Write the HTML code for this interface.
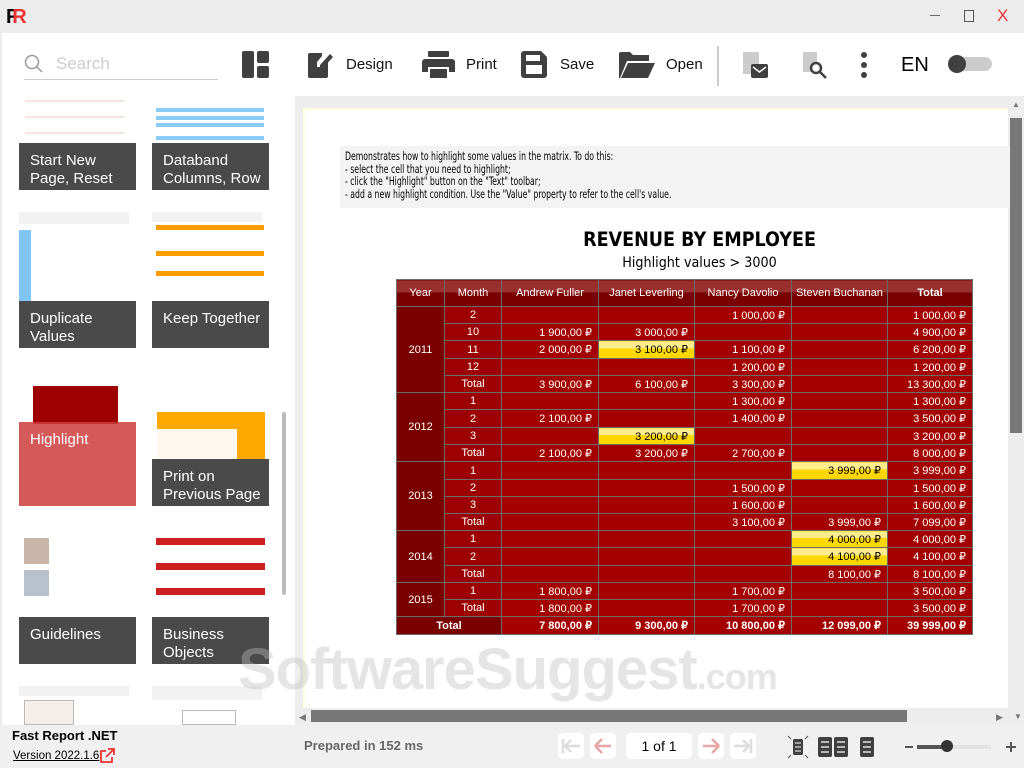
<!DOCTYPE html>
<html><head><meta charset="utf-8">
<style>
*{margin:0;padding:0;box-sizing:border-box}
body{width:1024px;height:768px;overflow:hidden;background:#fff;font-family:"Liberation Sans",sans-serif;position:relative}
.a{position:absolute}
.tb{font-size:15px;color:#111}
.tile{position:absolute;width:117px;background:#fff;overflow:hidden}
.lbl{position:absolute;left:0;right:0;bottom:0;background:#4a4a4a;color:#fff;font-size:15px;line-height:18px;padding:9px 0 0 11px}
.ln{position:absolute;height:2px;background:#ddd}
table{border-collapse:collapse;table-layout:fixed;font-family:"Liberation Sans",sans-serif;font-size:11px;color:#fff}
td{border:1px solid #6b6b6b;background:#a40000;text-align:right;padding:0 6px 0 0;white-space:nowrap;overflow:hidden}
td.m{text-align:center;padding:0;background:#9c0000}
td.y{text-align:center;padding:0;background:#7a0000}
th{border:1px solid #6b6b6b;font-weight:normal;background:linear-gradient(#983030 0,#983030 45%,#7a0000 46%,#7a0000);height:27px}
td.h{background:linear-gradient(#ffec8c 0,#ffec8c 40%,#ffd700 41%,#ffd700);color:#000}
tr.tot td{font-weight:bold;background:#a40000}
tr.tot td.y{background:#7a0000}
</style></head><body>
<div class="a" style="left:0;top:0;width:1024px;height:33px;background:#ececec"></div>
<div class="a" style="left:6px;top:6px;font:bold 20px 'Liberation Sans';color:#000;letter-spacing:-6px">F<span style="color:#e33">R</span></div>
<div class="a" style="left:930px;top:15px;width:10px;height:1px;background:#666"></div>
<div class="a" style="left:964px;top:10px;width:10px;height:12px;border:1px solid #555"></div>
<div class="a" style="left:997px;top:6px;color:#e33;font-size:17px">X</div>
<div class="a" style="left:0;top:33px;width:2px;height:692px;background:#ececec"></div>
<svg class="a" style="left:24px;top:54px" width="20" height="20"><circle cx="8" cy="8" r="6.5" fill="none" stroke="#999" stroke-width="1.5"/><line x1="12.5" y1="12.5" x2="18" y2="18" stroke="#999" stroke-width="1.5"/></svg>
<div class="a" style="left:56px;top:54px;font-size:17px;color:#ccc">Search</div>
<div class="a" style="left:24px;top:79px;width:194px;height:1px;background:#ccc"></div>
<svg class="a" style="left:242px;top:51px" width="27" height="27"><rect x="0" y="0" width="12" height="27" rx="2" fill="#404040"/><rect x="15" y="0" width="12" height="12" rx="2" fill="#404040"/><rect x="15" y="15" width="12" height="12" rx="2" fill="#404040"/></svg>
<svg class="a" style="left:308px;top:51px" width="26" height="27"><path d="M2 2h12v3l-5 6v5h5l6-6v15a2 2 0 0 1-2 2H2a2 2 0 0 1-2-2V4a2 2 0 0 1 2-2z" fill="#404040"/><path d="M12 14l10-11 3 3-10 11h-3z" fill="#404040"/></svg>
<div class="a tb" style="left:346px;top:56px">Design</div>
<svg class="a" style="left:422px;top:51px" width="33" height="27"><rect x="6" y="0" width="21" height="6" rx="1" fill="#404040"/><path d="M3 8h27a3 3 0 0 1 3 3v10h-6v-5H6v5H0V11a3 3 0 0 1 3-3z" fill="#404040"/><rect x="8" y="18" width="17" height="9" fill="#404040"/></svg>
<div class="a tb" style="left:466px;top:56px">Print</div>
<svg class="a" style="left:521px;top:51px" width="26" height="27"><path d="M3 0h17l6 6v18a3 3 0 0 1-3 3H3a3 3 0 0 1-3-3V3a3 3 0 0 1 3-3z" fill="#404040"/><rect x="5" y="4" width="14" height="6" fill="#fff"/><rect x="5" y="14" width="16" height="9" fill="#fff"/></svg>
<div class="a tb" style="left:560px;top:56px">Save</div>
<svg class="a" style="left:619px;top:52px" width="36" height="26"><path d="M0 2a2 2 0 0 1 2-2h9l3 3h16v6H8L1 26H0z" fill="#404040"/><path d="M9 11h27l-7 15H2z" fill="#404040"/></svg>
<div class="a tb" style="left:666px;top:56px">Open</div>
<div class="a" style="left:717px;top:46px;width:2px;height:40px;background:#ccc"></div>
<div class="a" style="left:743px;top:52px;width:16px;height:22px;background:#ccc"></div>
<svg class="a" style="left:751px;top:64px" width="17" height="14"><rect width="17" height="14" rx="2" fill="#404040"/><path d="M2 3l6.5 5 6.5-5" fill="none" stroke="#fff" stroke-width="1.5"/></svg>
<div class="a" style="left:803px;top:52px;width:14px;height:20px;background:#ccc"></div>
<svg class="a" style="left:809px;top:61px" width="20" height="18"><circle cx="7" cy="7" r="5" fill="#fff" stroke="#404040" stroke-width="2.5"/><line x1="11" y1="11" x2="17" y2="17" stroke="#404040" stroke-width="2.5"/></svg>
<div class="a" style="left:861px;top:52px;width:6px;height:6px;border-radius:3px;background:#404040"></div>
<div class="a" style="left:861px;top:62px;width:6px;height:6px;border-radius:3px;background:#404040"></div>
<div class="a" style="left:861px;top:72px;width:6px;height:6px;border-radius:3px;background:#404040"></div>
<div class="a" style="left:901px;top:54px;font-size:20px;color:#000">EN</div>
<div class="a" style="left:952px;top:57px;width:40px;height:14px;border-radius:7px;background:#ccc"></div>
<div class="a" style="left:948px;top:55px;width:18px;height:18px;border-radius:9px;background:#404040"></div>

<div class="tile" style="left:19px;top:96px;height:94px"><div class="ln" style="left:6px;top:4px;width:100px;background:#f5e6dc"></div><div class="ln" style="left:6px;top:20px;width:100px;background:#f5e6dc"></div><div class="ln" style="left:6px;top:36px;width:100px;background:#f5e6dc"></div><div class="lbl" style="height:47px">Start New<br>Page, Reset</div></div>
<div class="tile" style="left:152px;top:96px;height:94px"><div class="ln" style="left:4px;top:12px;width:108px;height:4px;background:#8ccaf7"></div><div class="ln" style="left:4px;top:20px;width:108px;height:4px;background:#8ccaf7"></div><div class="ln" style="left:4px;top:27px;width:108px;height:4px;background:#8ccaf7"></div><div class="ln" style="left:4px;top:40px;width:108px;height:4px;background:#8ccaf7"></div><div class="lbl" style="height:47px">Databand<br>Columns, Row</div></div>
<div class="tile" style="left:19px;top:212px;height:136px"><div class="ln" style="left:0;top:0;width:110px;height:12px;background:#f2f2f2"></div><div class="ln" style="left:0;top:18px;width:12px;height:80px;background:#7fc6f7"></div><div class="lbl" style="height:47px">Duplicate<br>Values</div></div>
<div class="tile" style="left:152px;top:212px;height:136px"><div class="ln" style="left:0;top:0;width:110px;height:10px;background:#f2f2f2"></div><div class="ln" style="left:4px;top:13px;width:108px;height:5px;background:#ff9c00"></div><div class="ln" style="left:4px;top:39px;width:108px;height:5px;background:#ff9c00"></div><div class="ln" style="left:4px;top:59px;width:108px;height:5px;background:#ff9c00"></div><div class="lbl" style="height:47px">Keep Together</div></div>
<div class="tile" style="left:19px;top:370px;height:136px"><div class="ln" style="left:14px;top:16px;width:85px;height:38px;background:#9e0000"></div><div class="lbl" style="height:84px;background:rgba(205,60,60,0.85)">Highlight</div></div>
<div class="tile" style="left:152px;top:370px;height:136px"><div class="ln" style="left:5px;top:42px;width:108px;height:47px;background:#ffa800"></div><div class="ln" style="left:5px;top:59px;width:80px;height:30px;background:#fff8ee"></div><div class="lbl" style="height:47px">Print on<br>Previous Page</div></div>
<div class="tile" style="left:19px;top:528px;height:136px"><div class="ln" style="left:5px;top:10px;width:25px;height:26px;background:#c9b6a8"></div><div class="ln" style="left:5px;top:42px;width:25px;height:26px;background:#b9c2cc"></div><div class="lbl" style="height:47px">Guidelines</div></div>
<div class="tile" style="left:152px;top:528px;height:136px"><div class="ln" style="left:4px;top:10px;width:109px;height:7px;background:#cc1f1f"></div><div class="ln" style="left:4px;top:35px;width:109px;height:7px;background:#cc1f1f"></div><div class="ln" style="left:4px;top:60px;width:109px;height:7px;background:#cc1f1f"></div><div class="lbl" style="height:47px">Business<br>Objects</div></div>
<div class="tile" style="left:19px;top:686px;height:39px"><div class="ln" style="left:0;top:0;width:110px;height:10px;background:#f2f2f2"></div><div class="ln" style="left:5px;top:14px;width:50px;height:25px;background:#f5eee8;border:1px solid #bbb"></div></div>
<div class="tile" style="left:152px;top:686px;height:39px"><div class="ln" style="left:0;top:0;width:110px;height:14px;background:#f2f2f2"></div><div class="ln" style="left:30px;top:24px;width:54px;height:15px;background:#fff;border:1px solid #bbb"></div></div>
<div class="a" style="left:282px;top:412px;width:4px;height:183px;background:#bbb;border-radius:2px"></div>

<div class="a" style="left:295px;top:96px;width:729px;height:629px;background:#ededed"></div>
<div class="a" style="left:303px;top:108px;width:705px;height:600px;background:#fff;border-left:2px solid #ffffe0;border-top:2px solid #ffffe0"></div>
<div class="a" style="left:340px;top:146px;width:695px;height:62px;background:#f3f3f3"></div>
<div class="a" style="left:345px;top:150px;font-family:'DejaVu Sans Condensed','DejaVu Sans',sans-serif;font-size:11.5px;line-height:12.7px;color:#000;transform:scaleX(0.75);transform-origin:left;white-space:nowrap">Demonstrates how to highlight some values in the matrix. To do this:<br>- select the cell that you need to highlight;<br>- click the "Highlight" button on the "Text" toolbar;<br>- add a new highlight condition. Use the "Value" property to refer to the cell's value.</div>
<div class="a" style="left:412px;top:228px;width:575px;text-align:center;font:bold 19.5px 'DejaVu Sans Condensed','DejaVu Sans',sans-serif;color:#000">REVENUE BY EMPLOYEE</div>
<div class="a" style="left:412px;top:255px;width:575px;text-align:center;font:14.2px 'DejaVu Sans Condensed','DejaVu Sans',sans-serif;color:#000">Highlight values &gt; 3000</div>

<table class="a" style="left:396px;top:279px;width:576px">
<colgroup><col style="width:48px"><col style="width:57px"><col style="width:97px"><col style="width:96px"><col style="width:97px"><col style="width:96px"><col style="width:85px"></colgroup>
<tr><th>Year</th><th>Month</th><th>Andrew Fuller</th><th>Janet Leverling</th><th>Nancy Davolio</th><th>Steven Buchanan</th><th style="font-weight:bold">Total</th></tr>
<tr style="height:17px"><td class="y" rowspan="5">2011</td><td class="m">2</td><td></td><td></td><td>1 000,00 ₽</td><td></td><td>1 000,00 ₽</td></tr>
<tr style="height:17px"><td class="m">10</td><td>1 900,00 ₽</td><td>3 000,00 ₽</td><td></td><td></td><td>4 900,00 ₽</td></tr>
<tr style="height:18px"><td class="m">11</td><td>2 000,00 ₽</td><td class="h">3 100,00 ₽</td><td>1 100,00 ₽</td><td></td><td>6 200,00 ₽</td></tr>
<tr style="height:17px"><td class="m">12</td><td></td><td></td><td>1 200,00 ₽</td><td></td><td>1 200,00 ₽</td></tr>
<tr style="height:17px"><td class="m">Total</td><td>3 900,00 ₽</td><td>6 100,00 ₽</td><td>3 300,00 ₽</td><td></td><td>13 300,00 ₽</td></tr>
<tr style="height:17px"><td class="y" rowspan="4">2012</td><td class="m">1</td><td></td><td></td><td>1 300,00 ₽</td><td></td><td>1 300,00 ₽</td></tr>
<tr style="height:18px"><td class="m">2</td><td>2 100,00 ₽</td><td></td><td>1 400,00 ₽</td><td></td><td>3 500,00 ₽</td></tr>
<tr style="height:17px"><td class="m">3</td><td></td><td class="h">3 200,00 ₽</td><td></td><td></td><td>3 200,00 ₽</td></tr>
<tr style="height:17px"><td class="m">Total</td><td>2 100,00 ₽</td><td>3 200,00 ₽</td><td>2 700,00 ₽</td><td></td><td>8 000,00 ₽</td></tr>
<tr style="height:18px"><td class="y" rowspan="4">2013</td><td class="m">1</td><td></td><td></td><td></td><td class="h">3 999,00 ₽</td><td>3 999,00 ₽</td></tr>
<tr style="height:17px"><td class="m">2</td><td></td><td></td><td>1 500,00 ₽</td><td></td><td>1 500,00 ₽</td></tr>
<tr style="height:17px"><td class="m">3</td><td></td><td></td><td>1 600,00 ₽</td><td></td><td>1 600,00 ₽</td></tr>
<tr style="height:17px"><td class="m">Total</td><td></td><td></td><td>3 100,00 ₽</td><td>3 999,00 ₽</td><td>7 099,00 ₽</td></tr>
<tr style="height:17px"><td class="y" rowspan="3">2014</td><td class="m">1</td><td></td><td></td><td></td><td class="h">4 000,00 ₽</td><td>4 000,00 ₽</td></tr>
<tr style="height:18px"><td class="m">2</td><td></td><td></td><td></td><td class="h">4 100,00 ₽</td><td>4 100,00 ₽</td></tr>
<tr style="height:17px"><td class="m">Total</td><td></td><td></td><td></td><td>8 100,00 ₽</td><td>8 100,00 ₽</td></tr>
<tr style="height:17px"><td class="y" rowspan="2">2015</td><td class="m">1</td><td>1 800,00 ₽</td><td></td><td>1 700,00 ₽</td><td></td><td>3 500,00 ₽</td></tr>
<tr style="height:17px"><td class="m">Total</td><td>1 800,00 ₽</td><td></td><td>1 700,00 ₽</td><td></td><td>3 500,00 ₽</td></tr>
<tr class="tot" style="height:18px"><td class="y" colspan="2">Total</td><td>7 800,00 ₽</td><td>9 300,00 ₽</td><td>10 800,00 ₽</td><td>12 099,00 ₽</td><td>39 999,00 ₽</td></tr>
</table>

<div class="a" style="left:238px;top:636px;font:bold 58px 'Liberation Sans',sans-serif;color:rgba(190,190,190,0.4);letter-spacing:-1px;white-space:nowrap">SoftwareSuggest<span style="font-size:36px">.com</span></div>

<div class="a" style="left:1010px;top:96px;width:14px;height:614px;background:#ededed"></div>
<div class="a" style="left:1012px;top:100px;color:#777;font-size:8px">▲</div>
<div class="a" style="left:1010px;top:118px;width:12px;height:315px;background:#777"></div>
<div class="a" style="left:1014px;top:712px;color:#777;font-size:8px">▼</div>
<div class="a" style="left:299px;top:712px;color:#777;font-size:9px">◀</div>
<div class="a" style="left:311px;top:710px;width:596px;height:12px;background:#777"></div>
<div class="a" style="left:996px;top:712px;color:#777;font-size:9px">▶</div>

<div class="a" style="left:0;top:725px;width:1024px;height:43px;background:#f0f0f0"></div>
<div class="a" style="left:12px;top:728px;font:bold 13px 'Liberation Sans';color:#000">Fast Report .NET</div>
<div class="a" style="left:13px;top:750px;font-size:11.5px;color:#000;text-decoration:underline">Version 2022.1.6</div>
<svg class="a" style="left:99px;top:748px" width="16" height="16"><path d="M7 3H2v11h11V9" fill="none" stroke="#e33" stroke-width="1.8"/><path d="M9 1h6v6M15 1L7 9" fill="none" stroke="#e33" stroke-width="1.8"/></svg>
<div class="a" style="left:304px;top:738px;font:bold 13px 'Liberation Sans';color:#666">Prepared in 152 ms</div>
<div class="a" style="left:558px;top:733px;width:26px;height:26px;background:#fff;border-radius:5px"></div>
<svg class="a" style="left:561px;top:737px" width="20" height="18"><path d="M2 2v14M4 9h15M4 9l6-6M4 9l6 6" fill="none" stroke="#ddd" stroke-width="2.5"/></svg>
<div class="a" style="left:590px;top:733px;width:26px;height:26px;background:#fff;border-radius:5px"></div>
<svg class="a" style="left:593px;top:737px" width="20" height="18"><path d="M2 9h16M2 9l7-7M2 9l7 7" fill="none" stroke="#e8a6a6" stroke-width="2.5"/></svg>
<div class="a" style="left:626px;top:733px;width:66px;height:26px;background:#fff;border-radius:5px;text-align:center;font-size:14px;line-height:26px;color:#000">1 of 1</div>
<div class="a" style="left:698px;top:733px;width:26px;height:26px;background:#fff;border-radius:5px"></div>
<svg class="a" style="left:701px;top:737px" width="20" height="18"><path d="M2 9h16M18 9l-7-7M18 9l-7 7" fill="none" stroke="#e8a6a6" stroke-width="2.5"/></svg>
<div class="a" style="left:730px;top:733px;width:26px;height:26px;background:#fff;border-radius:5px"></div>
<svg class="a" style="left:733px;top:737px" width="20" height="18"><path d="M18 2v14M1 9h15M16 9l-6-6M16 9l-6 6" fill="none" stroke="#ddd" stroke-width="2.5"/></svg>
<svg class="a" style="left:787px;top:735px" width="22" height="24"><rect x="6" y="4" width="10" height="16" rx="1.5" fill="#404040"/><path d="M8 8h6M8 12h6M8 16h6" stroke="#fff" stroke-width="1"/><path d="M1 1l3 3M21 1l-3 3M1 23l3-3M21 23l-3-3" stroke="#555" stroke-width="1"/></svg>
<svg class="a" style="left:818px;top:737px" width="30" height="20"><rect x="0" y="0" width="14" height="20" rx="2" fill="#404040"/><rect x="16" y="0" width="14" height="20" rx="2" fill="#404040"/><path d="M3 5h8M3 10h8M3 15h8M19 5h8M19 10h8M19 15h8" stroke="#fff" stroke-width="1.2"/></svg>
<svg class="a" style="left:860px;top:737px" width="14" height="20"><rect width="14" height="20" rx="2" fill="#404040"/><path d="M3 5h8M3 10h8M3 15h8" stroke="#fff" stroke-width="1.2"/></svg>
<div class="a" style="left:905px;top:746px;width:8px;height:2px;background:#555"></div>
<div class="a" style="left:917px;top:745px;width:74px;height:4px;background:#e2e2e2"></div>
<div class="a" style="left:917px;top:745px;width:32px;height:4px;background:#555"></div>
<div class="a" style="left:941px;top:740px;width:12px;height:12px;border-radius:6px;background:#333"></div>
<div class="a" style="left:1006px;top:746px;width:10px;height:2px;background:#555"></div>
<div class="a" style="left:1010px;top:742px;width:2px;height:10px;background:#555"></div>
</body></html>
